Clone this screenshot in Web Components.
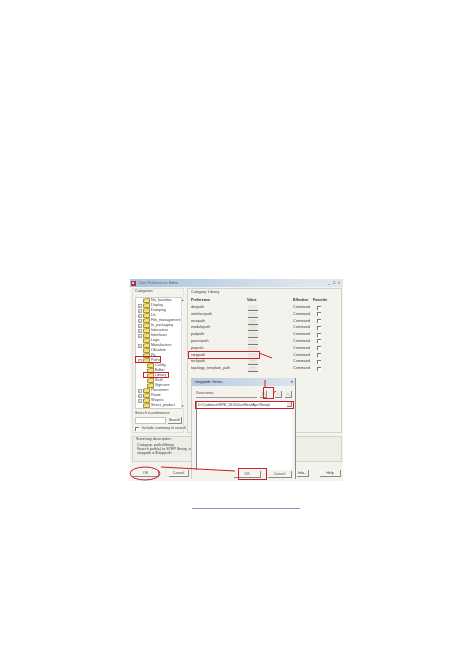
<!DOCTYPE html>
<html>
<head>
<meta charset="utf-8">
<title>User Preferences Editor</title>
<style>
  html, body { margin: 0; padding: 0; background: #fff; }
  body { padding: 279px 0 0 130px; height: 669px; box-sizing: border-box; overflow: hidden; font-family: "Liberation Sans", Arial, sans-serif; }
  .doc-link { display: block; width: 108px; margin: 27px 0 0 62px; border-top: 1px solid #8f8dba; }
</style>
</head>
<body>
<pref-window></pref-window>
<span class="doc-link"></span>

<script>
(() => {
  const css = `
    * { box-sizing: border-box; }
    :host { color: #444; font: 3.7px/5px "Liberation Sans", Arial, sans-serif; }
  `;

  const folder = `<svg width="7" height="5" viewBox="0 0 7 5"><path d="M0.5 4.5V1h2l.6-.6h3.4v4.1z" fill="#f6e070" stroke="#7d6c18" stroke-width=".7"/></svg>`;

  class WinButton extends HTMLElement {
    constructor() {
      super();
      this.attachShadow({ mode: 'open' }).innerHTML = `
        <style>${css}
          :host { display: flex; align-items: center; justify-content: center; height: 7px;
            background: #f5f4ef; border-right: 1px solid #8a8a8a; border-bottom: 1px solid #8a8a8a; }
        </style><slot></slot>`;
    }
  }

  class TreeRow extends HTMLElement {
    constructor() {
      super();
      const depth = this.getAttribute('depth') || 0;
      const box = this.hasAttribute('open') ? '−' : '+';
      this.attachShadow({ mode: 'open' }).innerHTML = `
        <style>${css}
          :host { display: flex; align-items: center; gap: 1px; height: 5px; white-space: nowrap; }
          .sign { flex: none; width: 4px; height: 4px; border: 1px solid #aaa; font-size: 3px; line-height: 2px; text-align: center; }
          .sign.none { border: 0; }
          svg { flex: none; }
        </style>
        <span class="sign ${this.hasAttribute('leaf') ? 'none' : ''}" style="margin-left:${depth * 4}px">${this.hasAttribute('leaf') ? '' : box}</span>
        ${folder}<span><slot></slot></span>`;
    }
  }

  class PrefTree extends HTMLElement {
    constructor() {
      super();
      const rows = [
        ['No_favorites', 0, 1], ['Display'], ['Dumping'], ['Dx'], ['File_management'], ['In_packaging'],
        ['Interactive'], ['Interfaces'], ['Logic', 0, 1], ['Manufacture'], ['Obsolete', 0, 1], ['Pic', 0, 1],
        ['Paths', 0, 0, 1], ['Config', 1, 1], ['Editor', 1, 1], ['Library', 1, 1], ['Stuff', 1, 1], ['Signcore', 1, 1],
        ['Placement'], ['Route'], ['Shapes'], ['Smart_product', 0, 1],
      ];
      this.attachShadow({ mode: 'open' }).innerHTML = `
        <style>${css}
          :host { display: flex; height: 112px; margin: 0 1px 0 2px; background: #fff; border: 1px solid #cfcfc8; }
          .list { flex: 1; padding: 0 0 0 2px; }
          .bar { width: 4px; display: flex; flex-direction: column; justify-content: space-between;
            border-left: 1px solid #ddd; background: #f4f3ee; color: #222; font-size: 3px; line-height: 4px; text-align: center; }
        </style>
        <div class="list">
          ${rows.map(([t, d, leaf, open]) => `<tree-row depth="${d || 0}" ${leaf ? 'leaf' : ''} ${open ? 'open' : ''}>${t}</tree-row>`).join('')}
        </div>
        <div class="bar"><span>▴</span><span>▾</span></div>`;
    }
  }

  class PrefRow extends HTMLElement {
    constructor() {
      super();
      this.attachShadow({ mode: 'open' }).innerHTML = `
        <style>${css}
          :host { display: grid; grid-template-columns: 57px 10px 35px 24px 4px; height: 6.8px; align-items: center; }
          .val { height: 6px; margin-top: 1px; background: #e9e8e1; border-bottom: 1px solid #777; text-align: center; line-height: 3px; color: #888; }
          .eff { grid-column: 4; }
          .fav { grid-column: 5; width: 4px; height: 4px; border-left: 1px solid #777; border-top: 1px solid #777; background: #fff; }
        </style>
        <span><slot></slot></span><span class="val">…</span><span class="eff">Command</span><span class="fav"></span>`;
    }
  }

  class PrefTable extends HTMLElement {
    constructor() {
      super();
      const names = ['deepath', 'interfacepath', 'mxxpath', 'modulepath', 'padpath', 'parampath', 'propath', 'steppath', 'techpath', 'topology_template_path'];
      this.attachShadow({ mode: 'open' }).innerHTML = `
        <style>${css}
          :host { display: block; padding: 0 0 0 3px; }
          .head { display: grid; grid-template-columns: 56px 46px 20px 20px; height: 7px; font-weight: bold; color: #333; align-items: center; white-space: nowrap; }
        </style>
        <div class="head"><span>Preference</span><span>Value</span><span>Effective</span><span>Favorite</span></div>
        ${names.map(n => `<pref-row>${n}</pref-row>`).join('')}`;
    }
  }

  class PathDialog extends HTMLElement {
    constructor() {
      super();
      this.attachShadow({ mode: 'open' }).innerHTML = `
        <style>${css}
          :host { position: absolute; left: 61px; top: 99px; width: 105px; height: 101px; display: flex; flex-direction: column;
            background: #f3f2ec; border-right: 1px solid #8a8a8a; border-left: 1px solid #ccc; }
          .title { height: 8px; flex: none; display: flex; justify-content: space-between; align-items: center; padding: 0 2px 0 3px;
            background: linear-gradient(90deg, #b9cbe0, #dbe4ee); color: #556; font-weight: bold; }
          .tools { display: flex; align-items: center; height: 8px; margin: 4px 3px 1px 4px; gap: 3px; }
          .dirs { flex: 1; height: 7px; border-bottom: 1px solid #999; }
          .tools b { width: 7px; height: 7px; background: #eeede6; border-right: 1px solid #888; border-bottom: 1px solid #888; text-align: center; color: #222; line-height: 6px; }
          .tools .new { margin-right: 5px; }
          .list { flex: 1; margin: 2px 3px 0 4px; background: #fff; border-left: 1px solid #888; border-top: 1px solid #aaa; }
          .path { height: 6px; padding-left: 1px; display: flex; justify-content: space-between; color: #334; white-space: nowrap; line-height: 6px; }
          .path i { width: 5px; height: 5px; background: #e8e7e0; border-bottom: 1px solid #888; border-right: 1px solid #888; }
          .btns { flex: none; display: flex; justify-content: flex-end; gap: 7px; height: 9px; padding: 1px 3px 1px 42px; }
          win-button { flex: 1; }
          .btns win-button:first-child { flex: 0 0 27px; }
        </style>
        <div class="title"><span>steppath: Items</span><span style="color:#222">×</span></div>
        <div class="tools"><span class="dirs">Directories</span><b class="new">□</b><b>↑</b><b>↓</b></div>
        <div class="list"><div class="path"><span>D:\\Cadence\\SPB_16.0\\UserNew\\Apc\\Setup\\</span><i></i></div></div>
        <div class="btns"><win-button>OK</win-button><win-button>Cancel</win-button></div>`;
    }
  }

  class PrefWindow extends HTMLElement {
    constructor() {
      super();
      this.attachShadow({ mode: 'open' }).innerHTML = `
        <style>${css}
          :host { display: block; position: relative; width: 213px; height: 202px; }
          .win { height: 100%; display: flex; flex-direction: column; background: #f3f2ec; filter: blur(.25px); }
          .title { height: 8px; flex: none; display: flex; align-items: center; gap: 3px; padding: 0 2px 0 1px;
            background: linear-gradient(90deg, #a9c3de, #dfe7ee 85%); color: #667; }
          .title svg { flex: none; }
          .title .name { flex: 1; }
          .ctrl { display: flex; gap: 1px; color: #222; }
          .ctrl span { width: 4px; text-align: center; }
          .main { flex: none; display: flex; flex-direction: column; gap: 3px; padding: 1px 1px 0 2px; }
          .top { display: flex; gap: 3px; height: 145px; }
          .left { width: 52px; display: flex; flex-direction: column; border: 1px solid #e0dfd8; }
          .tree-label { flex: none; height: 8px; padding-left: 2px; }
          .search { margin: 2px 0 0 2px; }
          .search-row { display: flex; justify-content: space-between; margin: 1px 1px 0 0; height: 7px; }
          .search-row i { width: 31px; background: #fff; border: 1px solid #c5c5be; }
          .search-row win-button { width: 14px; }
          .chk { display: flex; align-items: center; gap: 3px; height: 7px; margin-top: 1px; white-space: nowrap; }
          .chk i { flex: none; width: 4px; height: 4px; background: #fff; border-left: 1px solid #777; border-top: 1px solid #777; }
          .right { flex: 1; border: 1px solid #d4d3cc; }
          .cat-label { height: 8px; padding: 0 0 0 3px; line-height: 6px; }
          .summary { height: 26px; padding: 0 0 0 3px; border: 1px solid #d4d3cc; background: #eeede6; line-height: 4px; white-space: nowrap; color: #445; }
          .summary div { padding: 2px 0 0 1px; }
          .foot { flex: 1; display: flex; align-items: flex-end; padding: 0 2px 4px 3px; }
          .foot win-button:nth-child(1) { width: 26px; }
          .foot win-button:nth-child(2) { width: 20px; margin-left: 10px; }
          .foot .exp { margin: 0 0 0 7px; }
          .foot .spacer { flex: 1; }
          .foot win-button.info { width: 12px; }
          .foot win-button.help { width: 21px; margin-left: 11px; }
          svg.marks { position: absolute; left: 0; top: 0; width: 213px; height: 202px; pointer-events: none; overflow: visible; }
        </style>
        <div class="win">
          <div class="title">
            <svg width="5" height="5" viewBox="0 0 5 5"><rect width="5" height="5" fill="#b23040"/><rect x="1" y="1" width="2" height="2" fill="#f0d0c0"/></svg>
            <span class="name">User Preferences Editor</span><span class="ctrl"><span>_</span><span>□</span><span>×</span></span>
          </div>
          <div class="main">
            <div class="top">
              <div class="left">
                <div class="tree-label">Categories</div>
                <pref-tree></pref-tree>
                <div class="search">Search in preference:
                  <div class="search-row"><i></i><win-button>Search</win-button></div>
                  <div class="chk"><i></i><span>Include summary in search</span></div>
                </div>
              </div>
              <div class="right">
                <div class="cat-label">Category: Library</div>
                <pref-table></pref-table>
              </div>
            </div>
            <div class="summary">Summary description:
              <div>Category: paths/library<br>Search path(s) to STEP library, ex: step<br>steppath = $steppath</div>
            </div>
          </div>
          <div class="foot">
            <win-button>OK</win-button><win-button>Cancel</win-button>
            <span class="chk exp"><i></i><span>Expand</span></span>
            <span class="spacer"></span>
            <win-button class="info">Info...</win-button><win-button class="help">Help</win-button>
          </div>
        </div>
        <path-dialog></path-dialog>
        <svg class="marks" viewBox="0 0 213 202" fill="none" stroke="#c8202c" stroke-width="1">
          <rect x="5.5" y="77.5" width="25" height="6"/>
          <rect x="13.5" y="93.5" width="25" height="5"/>
          <rect x="58.5" y="72.5" width="71" height="7"/>
          <path d="M129 74l13 5"/>
          <rect x="133.5" y="108.5" width="10" height="11"/>
          <path d="M135 101v7M143 114l3-2"/>
          <rect x="65.5" y="122.5" width="98" height="7"/>
          <rect x="108.5" y="189.5" width="28" height="11"/>
          <ellipse cx="15" cy="194.5" rx="15" ry="6.5"/>
          <path d="M31 188l74 4"/>
        </svg>`;
    }
  }

  customElements.define('win-button', WinButton);
  customElements.define('tree-row', TreeRow);
  customElements.define('pref-tree', PrefTree);
  customElements.define('pref-row', PrefRow);
  customElements.define('pref-table', PrefTable);
  customElements.define('path-dialog', PathDialog);
  customElements.define('pref-window', PrefWindow);
})();
</script>
</body>
</html>
